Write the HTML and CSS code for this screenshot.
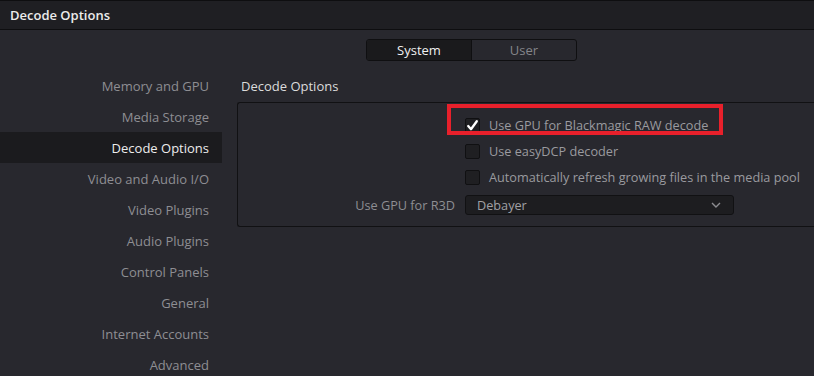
FILE: index.html
```html
<!DOCTYPE html>
<html>
<head>
<meta charset="utf-8">
<link rel="stylesheet" href="styles.css">
</head>
<body>
<div class="titlebar">Decode Options</div>
<div class="main">
  <div class="tabs">
    <div class="tab active">System</div>
    <div class="tab">User</div>
  </div>
  <div class="body">
    <nav class="sidebar">
      <div class="item">Memory and GPU</div>
      <div class="item">Media Storage</div>
      <div class="item selected">Decode Options</div>
      <div class="item">Video and Audio I/O</div>
      <div class="item">Video Plugins</div>
      <div class="item">Audio Plugins</div>
      <div class="item">Control Panels</div>
      <div class="item">General</div>
      <div class="item">Internet Accounts</div>
      <div class="item">Advanced</div>
    </nav>
    <section class="content">
      <div class="heading">Decode Options</div>
      <div class="panel">
        <div class="row">
          <div class="label"></div>
          <span class="cb checked"><svg width="13" height="13" viewBox="0 0 13 13"><path d="M2.2 7 L5 10.2 L10.8 2.2" fill="none" stroke="#fff" stroke-width="2.3" stroke-linecap="round" stroke-linejoin="round"/></svg></span>
          <span class="cblabel">Use GPU for Blackmagic RAW decode</span>
        </div>
        <div class="row">
          <div class="label"></div>
          <span class="cb"></span>
          <span class="cblabel">Use easyDCP decoder</span>
        </div>
        <div class="row">
          <div class="label"></div>
          <span class="cb"></span>
          <span class="cblabel">Automatically refresh growing files in the media pool</span>
        </div>
        <div class="row select-row">
          <div class="label">Use GPU for R3D</div>
          <div class="select">
            <span>Debayer</span>
            <svg width="10" height="6" viewBox="0 0 10 6"><path d="M1 1 L5 5 L9 1" fill="none" stroke="#8c8c90" stroke-width="1.4"/></svg>
          </div>
        </div>
        <div class="highlight"></div>
      </div>
    </section>
  </div>
</div>
</body>
</html>
```

FILE: styles.css
```css
* { box-sizing: border-box; }
html, body { margin: 0; padding: 0; }
body {
  background: #28282e;
  font-family: "Open Sans", "Noto Sans", sans-serif;
  font-size: 13px;
  color: #8e8e93;
  width: 814px;
  height: 376px;
  overflow: hidden;
}
.titlebar {
  height: 30px;
  background: #1f1f23;
  border-top: 1px solid #0e0e10;
  border-bottom: 1px solid #0e0e10;
  color: #ececec;
  font-weight: 600;
  line-height: 28px;
  padding-left: 10px;
}
.main { display: flex; flex-direction: column; }
.tabs {
  display: flex;
  margin: 9px 0 0 366px;
  height: 22px;
  width: 211px;
  border: 1px solid #0f0f11;
  border-radius: 3px;
  overflow: hidden;
}
.tab {
  flex: 1;
  text-align: center;
  line-height: 20px;
  color: #85858a;
}
.tab + .tab { border-left: 1px solid #0f0f11; }
.tab.active { background: #1a1a1c; color: #f0f0f0; }
.body { display: flex; margin-top: 9px; }
.sidebar { width: 222px; flex: none; }
.item {
  height: 31px;
  line-height: 32px;
  text-align: right;
  padding-right: 13px;
  color: #8e8e93;
}
.item.selected { background: #1b1b1e; color: #ededed; }
.content { margin-left: 15px; flex: 1; }
.heading {
  height: 32px;
  line-height: 32px;
  padding-left: 4px;
  color: #dcdcdc;
}
.panel {
  position: relative;
  border: 1px solid #111113;
  border-right: none;
  border-radius: 3px 0 0 3px;
  padding: 9px 0 11px 0;
  width: 600px;
  font-size: 12.7px;
}
.row {
  display: flex;
  align-items: center;
  height: 26px;
}
.label {
  width: 227px;
  flex: none;
  text-align: right;
  padding-right: 10px;
  color: #8e8e93;
}
.cb {
  width: 15px;
  height: 15px;
  flex: none;
  background: #1f1f22;
  border: 1px solid #101012;
  border-radius: 2px;
  display: flex;
  align-items: center;
  justify-content: center;
}
.cblabel { margin-left: 9px; color: #9a9a9f; white-space: nowrap; }
.select-row { height: 20px; margin-top: 5px; }
.select {
  width: 269px;
  height: 20px;
  background: #1d1d20;
  border: 1px solid #111113;
  border-radius: 3px;
  display: flex;
  align-items: center;
  justify-content: space-between;
  padding: 0 12px 0 11px;
  color: #a0a0a5;
}
.highlight {
  position: absolute;
  left: 209px;
  top: 1px;
  width: 276px;
  height: 31px;
  border: 4px solid #e8202b;
}
```
